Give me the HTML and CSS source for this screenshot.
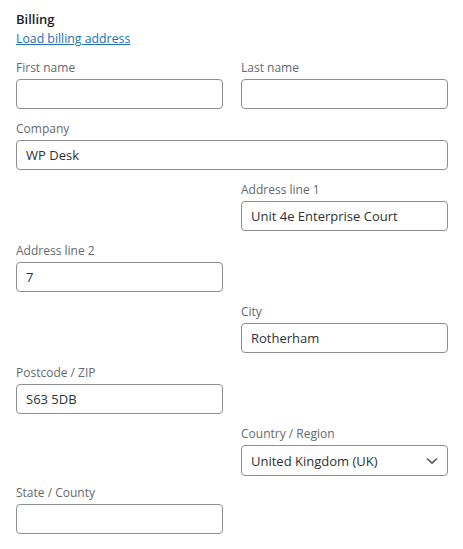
FILE: index.html
```html
<!DOCTYPE html>
<html lang="en">
<head>
<meta charset="utf-8">
<title>Billing</title>
<link rel="stylesheet" href="styles.css">
</head>
<body>
<div class="billing">
  <h3 class="title">Billing</h3>
  <a class="load-link" href="#">Load billing address</a>
  <div class="fields">
    <div class="pair">
      <div class="field">
        <label>First name</label>
        <input class="text" type="text" value="">
      </div>
      <div class="field">
        <label>Last name</label>
        <input class="text" type="text" value="">
      </div>
    </div>
    <div class="field col-full">
      <label>Company</label>
      <input class="text" type="text" value="WP Desk">
    </div>
    <div class="field col-right">
      <label>Address line 1</label>
      <input class="text" type="text" value="Unit 4e Enterprise Court">
    </div>
    <div class="field col-left">
      <label>Address line 2</label>
      <input class="text" type="text" value="7">
    </div>
    <div class="field col-right">
      <label>City</label>
      <input class="text" type="text" value="Rotherham">
    </div>
    <div class="field col-left">
      <label>Postcode / ZIP</label>
      <input class="text" type="text" value="S63 5DB">
    </div>
    <div class="field col-right">
      <label>Country / Region</label>
      <div class="select-wrap">
        <select class="select">
          <option>United Kingdom (UK)</option>
        </select>
        <svg class="chevron" width="12" height="8" viewBox="0 0 12 8" aria-hidden="true">
          <path d="M1 1.5 L6 6.2 L11 1.5" fill="none" stroke="#50575e" stroke-width="1.6"/>
        </svg>
      </div>
    </div>
    <div class="field col-left after-select">
      <label>State / County</label>
      <input class="text" type="text" value="">
    </div>
  </div>
</div>
</body>
</html>
```

FILE: styles.css
```css
html, body {
  margin: 0;
  padding: 0;
  background: #ffffff;
}
body {
  font-family: "Open Sans", "Noto Sans", "Liberation Sans", sans-serif;
  color: #3c434a;
}
.billing {
  padding: 10px 15px 0 16px;
  width: 432px;
}
.title {
  margin: 0;
  font-size: 13px;
  line-height: 18px;
  font-weight: 600;
  color: #1d2327;
}
.load-link {
  display: block;
  width: fit-content;
  margin-top: 2px;
  font-size: 12.3px;
  line-height: 18px;
  color: #2271b1;
  text-decoration: underline;
}
.fields {
  margin-top: 11px;
  display: flex;
  flex-direction: column;
  gap: 11px;
}
.pair {
  display: flex;
  justify-content: space-between;
}
.field {
  width: 207px;
}
.col-left { align-self: flex-start; }
.col-right { align-self: flex-end; }
.col-full { width: 100%; }
.after-select { margin-top: -3px; }
.field label {
  display: block;
  font-size: 12px;
  line-height: 18px;
  margin-bottom: 2px;
  color: #646970;
}
.text, .select {
  display: block;
  box-sizing: border-box;
  width: 100%;
  height: 30px;
  margin: 0;
  padding: 0 9px;
  border: 1px solid #8c8f94;
  border-radius: 4px;
  background: #ffffff;
  font-family: inherit;
  font-size: 13px;
  color: #2c3338;
  outline: none;
}
.select-wrap {
  position: relative;
}
.select {
  height: 31px;
  -webkit-appearance: none;
  appearance: none;
  padding-right: 28px;
}
.chevron {
  position: absolute;
  right: 10px;
  top: 12px;
}
```
